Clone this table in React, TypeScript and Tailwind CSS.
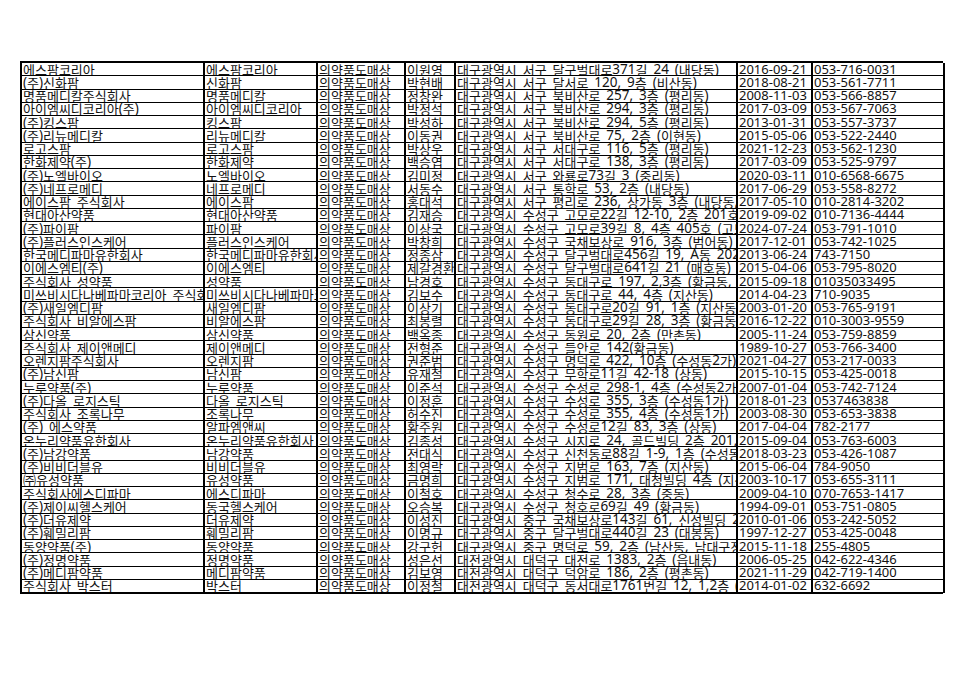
import React from "react";

const rows: string[][] = [
  ["에스팜코리아", "에스팜코리아", "이원영", "대구광역시 서구 달구벌대로371길 24 (내당동)", "2016-09-21", "053-716-0031"],
  ["(주)신화팜", "신화팜", "박현배", "대구광역시 서구 달서로 120, 9층 (비산동)", "2018-08-21", "053-561-7711"],
  ["명품메디칼주식회사", "명품메디칼", "정창완", "대구광역시 서구 북비산로 257, 3층 (평리동)", "2008-11-03", "053-566-8857"],
  ["아이엠씨디코리아(주)", "아이엠씨디코리아", "박정석", "대구광역시 서구 북비산로 294, 3층 (평리동)", "2017-03-09", "053-567-7063"],
  ["(주)킹스팜", "킹스팜", "박성하", "대구광역시 서구 북비산로 294, 5층 (평리동)", "2013-01-31", "053-557-3737"],
  ["(주)리뉴메디칼", "리뉴메디칼", "이동권", "대구광역시 서구 북비산로 75, 2층 (이현동)", "2015-05-06", "053-522-2440"],
  ["로고스팜", "로고스팜", "박상우", "대구광역시 서구 서대구로 116, 5층 (평리동)", "2021-12-23", "053-562-1230"],
  ["한화제약(주)", "한화제약", "백승엽", "대구광역시 서구 서대구로 138, 3층 (평리동)", "2017-03-09", "053-525-9797"],
  ["(주)노엘바이오", "노엘바이오", "김미정", "대구광역시 서구 와룡로73길 3 (중리동)", "2020-03-11", "010-6568-6675"],
  ["(주)네프로메디", "네프로메디", "서동수", "대구광역시 서구 통학로 53, 2층 (내당동)", "2017-06-29", "053-558-8272"],
  ["에이스팜 주식회사", "에이스팜", "홍대석", "대구광역시 서구 평리로 236, 상가동 3층 (내당동, 평리동)", "2017-05-10", "010-2814-3202"],
  ["현대아산약품", "현대아산약품", "김재승", "대구광역시 수성구 고모로22길 12-10, 2층 201호 (고모동)", "2019-09-02", "010-7136-4444"],
  ["(주)파이팜", "파이팜", "이상국", "대구광역시 수성구 고모로39길 8, 4층 405호 (고모동)", "2024-07-24", "053-791-1010"],
  ["(주)플러스인스케어", "플러스인스케어", "박창희", "대구광역시 수성구 국채보상로 916, 3층 (범어동)", "2017-12-01", "053-742-1025"],
  ["한국메디파마유한회사", "한국메디파마유한회사", "정종삼", "대구광역시 수성구 달구벌대로456길 19, A동 202호", "2013-06-24", "743-7150"],
  ["이에스엠티(주)", "이에스엠티", "제갈경환", "대구광역시 수성구 달구벌대로641길 21 (매호동)", "2015-04-06", "053-795-8020"],
  ["주식회사 성약품", "성약품", "남경호", "대구광역시 수성구 동대구로 197, 2,3층 (황금동, 수성동)", "2015-09-18", "01035033495"],
  ["미쓰비시다나베파마코리아 주식회사", "미쓰비시다나베파마코리아", "김보수", "대구광역시 수성구 동대구로 44, 4층 (지산동)", "2014-04-23", "710-9035"],
  ["(주)새일엠디팜", "새일엠디팜", "이상기", "대구광역시 수성구 동대구로20길 91, 1층 (지산동)", "2003-01-20", "053-765-9191"],
  ["주식회사 비알에스팜", "비알에스팜", "최봉렬", "대구광역시 수성구 동대구로29길 28, 3층 (황금동)", "2016-12-22", "010-3003-9559"],
  ["삼신약품", "삼신약품", "백옥종", "대구광역시 수성구 동원로 20, 2층 (만촌동)", "2005-11-24", "053-759-8859"],
  ["주식회사 제이앤메디", "제이앤메디", "전형준", "대구광역시 수성구 들안로 142(황금동)", "1989-10-27", "053-766-3400"],
  ["오렌지팜주식회사", "오렌지팜", "권준범", "대구광역시 수성구 명덕로 422, 10층 (수성동2가)", "2021-04-27", "053-217-0033"],
  ["(주)남신팜", "남신팜", "유재철", "대구광역시 수성구 무학로11길 42-18 (상동)", "2015-10-15", "053-425-0018"],
  ["누루약품(주)", "누루약품", "이준석", "대구광역시 수성구 수성로 298-1, 4층 (수성동2가)", "2007-01-04", "053-742-7124"],
  ["(주)다올 로지스틱", "다올 로지스틱", "이정훈", "대구광역시 수성구 수성로 355, 3층 (수성동1가)", "2018-01-23", "0537463838"],
  ["주식회사 조록나무", "조록나무", "허수진", "대구광역시 수성구 수성로 355, 4층 (수성동1가)", "2003-08-30", "053-653-3838"],
  ["(주) 에스약품", "알파엠앤씨", "황주원", "대구광역시 수성구 수성로12길 83, 3층 (상동)", "2017-04-04", "782-2177"],
  ["온누리약품유한회사", "온누리약품유한회사", "김종성", "대구광역시 수성구 시지로 24, 골드빌딩 2층 201, 202호", "2015-09-04", "053-763-6003"],
  ["(주)남강약품", "남강약품", "전대식", "대구광역시 수성구 신천동로88길 1-9, 1층 (수성동)", "2018-03-23", "053-426-1087"],
  ["(주)비비더블유", "비비더블유", "최영락", "대구광역시 수성구 지범로 163, 7층 (지산동)", "2015-06-04", "784-9050"],
  ["㈜유성약품", "유성약품", "금명희", "대구광역시 수성구 지범로 171, 대청빌딩 4층 (지산동)", "2003-10-17", "053-655-3111"],
  ["주식회사에스디파마", "에스디파마", "이철호", "대구광역시 수성구 청수로 28, 3층 (중동)", "2009-04-10", "070-7653-1417"],
  ["(주)제이씨헬스케어", "동국헬스케어", "오승복", "대구광역시 수성구 청호로69길 49 (황금동)", "1994-09-01", "053-751-0805"],
  ["(주)더유제약", "더유제약", "이성진", "대구광역시 중구 국채보상로143길 61, 신성빌딩 2층", "2010-01-06", "053-242-5052"],
  ["(주)훼밀리팜", "훼밀리팜", "이명규", "대구광역시 중구 달구벌대로440길 23 (대봉동)", "1997-12-27", "053-425-0048"],
  ["동양약품(주)", "동양약품", "강구헌", "대구광역시 중구 명덕로 59, 2층 (남산동, 남대구정비)", "2015-11-18", "255-4805"],
  ["(주)정명약품", "정명약품", "성은선", "대전광역시 대덕구 대전로 1383, 2층 (읍내동)", "2006-05-25", "042-622-4346"],
  ["(주)메디팜약품", "메디팜약품", "김보영", "대전광역시 대덕구 덕암로 186, 2층 (평촌동)", "2021-11-29", "042-719-1400"],
  ["주식회사 박스터", "박스터", "이정철", "대전광역시 대덕구 동서대로1761번길 12, 1,2층 (와동)", "2014-01-02", "632-6692"],
];

function Txt({ s }: { s: string }) {
  const parts = s.split(/([\x21-\x7E]+)/);
  return (
    <>
      {parts.map((p, i) =>
        /^[\x21-\x7E]+$/.test(p) ? (
          <span key={i} className="text-[13.5px] font-['Noto_Sans',sans-serif]">
            {p}
          </span>
        ) : (
          <span key={i}>{p}</span>
        )
      )}
    </>
  );
}

const cell =
  "h-[13.25px] border-r-2 border-b border-black overflow-hidden whitespace-pre pl-[1px] leading-[13px] flex items-center [word-spacing:3px]";

export default function App() {
  return (
    <div className="w-[966px] h-[683px] bg-white font-['Noto_Sans_CJK_KR','Noto_Sans',sans-serif] text-[13px] text-[#111]">
      <div className="pt-[61px] pl-[20px]">
        <div className="w-[923px] border-l-2 border-t-2 border-b border-black grid grid-cols-[183px_113px_88px_50px_282px_75px_132px]">
          {rows.map((r, i) => (
            <React.Fragment key={i}>
              <div className={cell}><Txt s={r[0]} /></div>
              <div className={cell}><Txt s={r[1]} /></div>
              <div className={cell}><Txt s="의약품도매상" /></div>
              <div className={cell}><Txt s={r[2]} /></div>
              <div className={cell}><Txt s={r[3]} /></div>
              <div className={cell + " font-['Noto_Sans',sans-serif] text-[13px]"}>{r[4]}</div>
              <div className={cell + " font-['Noto_Sans',sans-serif] text-[13px]"}>{r[5]}</div>
            </React.Fragment>
          ))}
        </div>
      </div>
    </div>
  );
}
